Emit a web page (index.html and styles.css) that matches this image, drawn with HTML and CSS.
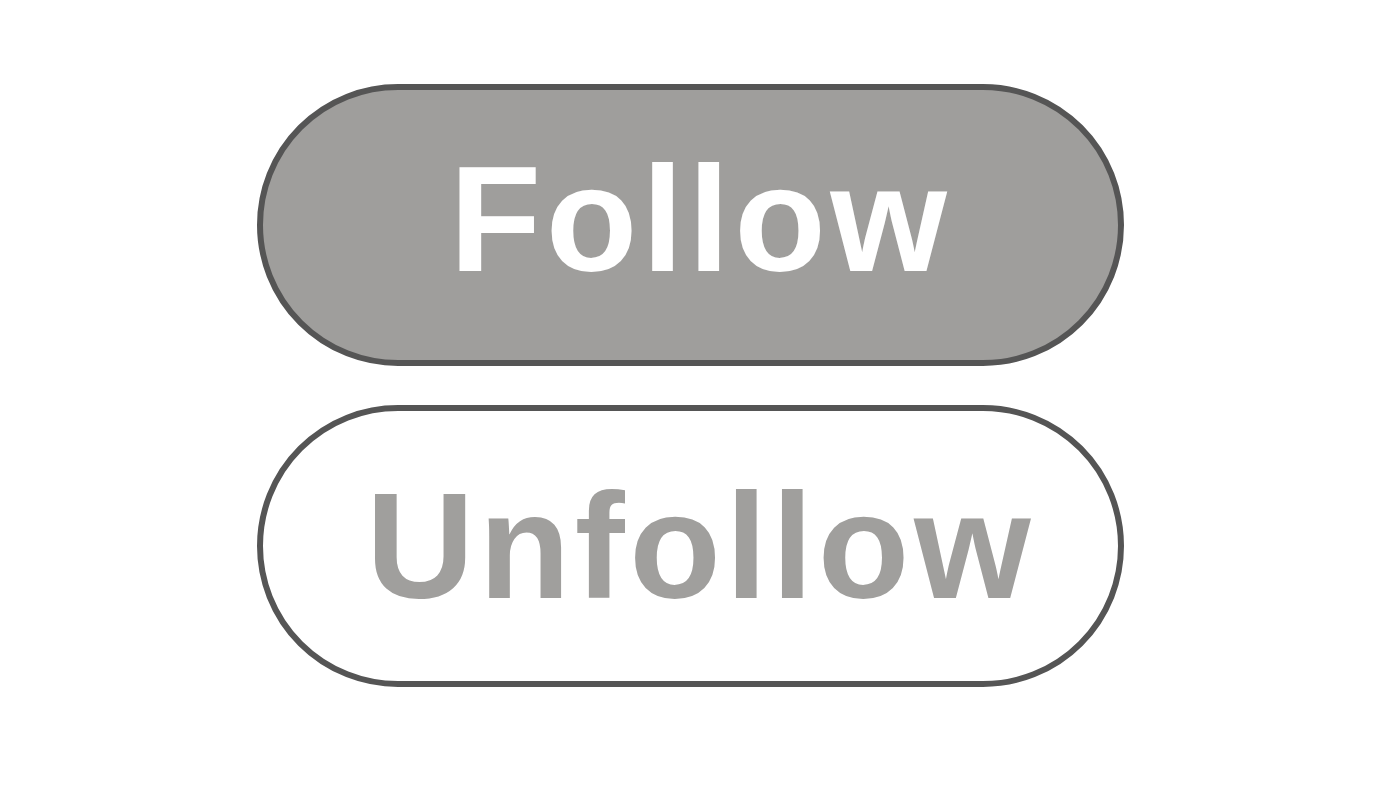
FILE: index.html
```html
<!DOCTYPE html>
<html lang="en">
<head>
    <meta charset="UTF-8">
    <meta name="viewport" content="width=device-width, initial-scale=1.0">
    <title>Follow buttons</title>
    <link rel="stylesheet" href="styles.css">
</head>
<body>
    <div class="stack">
        <button type="button" class="pill pill-filled">Follow</button>
        <button type="button" class="pill pill-outline">Unfollow</button>
    </div>
</body>
</html>
```
FILE: styles.css
```css
body {
    margin: 0;
    padding: 0;
    background: #fff;
    font-family: "Liberation Sans", Arial, sans-serif;
}

.stack {
    display: flex;
    flex-direction: column;
    align-items: center;
    gap: 39px;
    padding-top: 84px;
}

.pill {
    box-sizing: border-box;
    width: 867px;
    height: 282px;
    margin-right: 19px;
    border: 6px solid #555;
    border-radius: 141px;
    font-family: inherit;
    font-size: 150px;
    font-weight: bold;
    letter-spacing: 4.5px;
    padding: 0 0 0 20px;
    cursor: pointer;
}

.pill-filled {
    background: #9f9e9c;
    color: #fff;
    padding-bottom: 12px;
}

.pill-outline {
    background: #fff;
    color: #a09f9d;
}
```
